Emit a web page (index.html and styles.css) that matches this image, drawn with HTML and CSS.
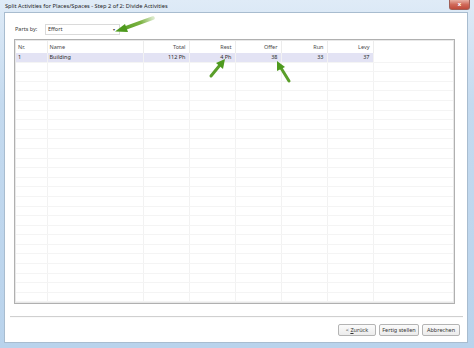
FILE: index.html
```html
<!DOCTYPE html>
<html lang="en">
<head>
    <meta charset="UTF-8">
    <title>Split Activities for Places/Spaces - Step 2 of 2: Divide Activities</title>
    <link rel="stylesheet" href="styles.css">
</head>
<body>
    <div class="window">
        <div class="titlebar">
            <span class="title">Split Activities for Places/Spaces - Step 2 of 2: Divide Activities</span>
            <span class="close">x</span>
        </div>

        <div class="client">
            <div class="parts">
                <span class="parts-label">Parts by:</span>
                <div class="combo">
                    <span>Effort</span>
                    <span class="combo-arrow">&#9662;</span>
                </div>
            </div>

            <div class="listview">
                <table class="grid">
                    <colgroup>
                        <col class="c-nr"><col class="c-name"><col class="c-num"><col class="c-num">
                        <col class="c-num"><col class="c-num"><col class="c-num"><col>
                    </colgroup>
                    <thead>
                        <tr>
                            <th>Nr.</th>
                            <th>Name</th>
                            <th class="num">Total</th>
                            <th class="num">Rest</th>
                            <th class="num">Offer</th>
                            <th class="num">Run</th>
                            <th class="num">Levy</th>
                            <th class="filler"></th>
                        </tr>
                    </thead>
                    <tbody>
                        <tr class="selected">
                            <td>1</td>
                            <td>Building</td>
                            <td class="num">112 Ph</td>
                            <td class="num">4 Ph</td>
                            <td class="num">38</td>
                            <td class="num">33</td>
                            <td class="num">37</td>
                            <td class="filler"></td>
                        </tr>
                        <tr><td></td><td></td><td></td><td></td><td></td><td></td><td></td><td></td></tr>
                        <tr><td></td><td></td><td></td><td></td><td></td><td></td><td></td><td></td></tr>
                        <tr><td></td><td></td><td></td><td></td><td></td><td></td><td></td><td></td></tr>
                        <tr><td></td><td></td><td></td><td></td><td></td><td></td><td></td><td></td></tr>
                        <tr><td></td><td></td><td></td><td></td><td></td><td></td><td></td><td></td></tr>
                        <tr><td></td><td></td><td></td><td></td><td></td><td></td><td></td><td></td></tr>
                        <tr><td></td><td></td><td></td><td></td><td></td><td></td><td></td><td></td></tr>
                        <tr><td></td><td></td><td></td><td></td><td></td><td></td><td></td><td></td></tr>
                        <tr><td></td><td></td><td></td><td></td><td></td><td></td><td></td><td></td></tr>
                        <tr><td></td><td></td><td></td><td></td><td></td><td></td><td></td><td></td></tr>
                        <tr><td></td><td></td><td></td><td></td><td></td><td></td><td></td><td></td></tr>
                        <tr><td></td><td></td><td></td><td></td><td></td><td></td><td></td><td></td></tr>
                        <tr><td></td><td></td><td></td><td></td><td></td><td></td><td></td><td></td></tr>
                        <tr><td></td><td></td><td></td><td></td><td></td><td></td><td></td><td></td></tr>
                        <tr><td></td><td></td><td></td><td></td><td></td><td></td><td></td><td></td></tr>
                        <tr><td></td><td></td><td></td><td></td><td></td><td></td><td></td><td></td></tr>
                        <tr><td></td><td></td><td></td><td></td><td></td><td></td><td></td><td></td></tr>
                        <tr><td></td><td></td><td></td><td></td><td></td><td></td><td></td><td></td></tr>
                        <tr><td></td><td></td><td></td><td></td><td></td><td></td><td></td><td></td></tr>
                        <tr><td></td><td></td><td></td><td></td><td></td><td></td><td></td><td></td></tr>
                        <tr><td></td><td></td><td></td><td></td><td></td><td></td><td></td><td></td></tr>
                        <tr><td></td><td></td><td></td><td></td><td></td><td></td><td></td><td></td></tr>
                        <tr><td></td><td></td><td></td><td></td><td></td><td></td><td></td><td></td></tr>
                        <tr><td></td><td></td><td></td><td></td><td></td><td></td><td></td><td></td></tr>
                        <tr><td></td><td></td><td></td><td></td><td></td><td></td><td></td><td></td></tr>
                    </tbody>
                </table>
            </div>

            <div class="separator"></div>

            <div class="buttons">
                <button class="btn btn-back">&lt; <u>Z</u>urück</button>
                <button class="btn btn-finish">Fertig stellen</button>
                <button class="btn btn-cancel">Abbrechen</button>
            </div>
        </div>

        <!-- hinweis-pfeile aus dem screenshot -->
        <svg class="arrows" width="474" height="348" viewBox="0 0 474 348">
            <defs>
                <linearGradient id="fade1" x1="153" y1="18" x2="118" y2="31" gradientUnits="userSpaceOnUse">
                    <stop offset="0" stop-color="#d8e8c8"/>
                    <stop offset="0.35" stop-color="#7cb342"/>
                    <stop offset="1" stop-color="#4e9a1e"/>
                </linearGradient>
            </defs>
            <g stroke-linecap="round">
                <line x1="153" y1="18" x2="124" y2="28.5" stroke="url(#fade1)" stroke-width="3.5"/>
                <polygon points="115,31.5 125,24 128,32" fill="#4e9a1e"/>

                <line x1="211" y1="76" x2="220" y2="65" stroke="#5a9e2a" stroke-width="3"/>
                <polygon points="225,59 216,63 223,69" fill="#4e9a1e"/>

                <line x1="289" y1="81" x2="281" y2="68" stroke="#5a9e2a" stroke-width="3"/>
                <polygon points="277,61 277,71 285,67" fill="#4e9a1e"/>
            </g>
        </svg>
    </div>
</body>
</html>
```

FILE: styles.css
```css
body {
    margin: 0;
    font-family: "Noto Sans", "Liberation Sans", sans-serif;
    font-size: 5.5px;
    color: #3a3a3a;
}

.window {
    position: relative;
    width: 474px;
    height: 348px;
    display: flex;
    flex-direction: column;
    background: linear-gradient(#dfebf7, #c4daef 30%, #b9d3ec);
    overflow: hidden;
}

.titlebar {
    height: 12px;
    display: flex;
    align-items: flex-start;
    padding-left: 5px;
}

.title {
    margin-top: 2px;
    font-size: 5.7px;
    color: #1e1e1e;
}

.close {
    margin-left: auto;
    margin-right: 4px;
    width: 19px;
    height: 9px;
    line-height: 8px;
    text-align: center;
    color: #fff;
    font-size: 6px;
    font-weight: bold;
    background: linear-gradient(#e8b0a4, #d06a5a 50%, #c04a3a);
    border: 1px solid #a06058;
    border-top: none;
    border-radius: 0 0 3px 3px;
}

.client {
    flex: 1;
    margin: 0 6px 5px 4px;
    background: #fff;
    border: 1px solid #a8bccf;
    display: flex;
    flex-direction: column;
}

.parts {
    display: flex;
    align-items: center;
    margin-top: 10px;
    padding-left: 10px;
    height: 12px;
}

.parts-label {
    width: 30px;
}

.combo {
    width: 75px;
    height: 11px;
    box-sizing: border-box;
    border: 1px solid #dadada;
    display: flex;
    align-items: center;
    padding: 0 4px 0 2px;
}

.combo-arrow {
    margin-left: auto;
    font-size: 4px;
    color: #444;
}

.listview {
    margin: 4px 12px 0 9px;
    height: 265px;
    box-sizing: border-box;
    border: 1px solid #b0b0b0;
    box-shadow: inset 0 0 0 1px #e8e8e8;
    padding: 1px;
    overflow: hidden;
}

.grid {
    width: 100%;
    table-layout: fixed;
    border-collapse: collapse;
}

.c-nr { width: 31px; }
.c-name { width: 96px; }
.c-num { width: 46px; }

.grid th,
.grid td {
    padding: 0 3px 0 2px;
    text-align: left;
    font-weight: normal;
    white-space: nowrap;
    overflow: hidden;
}

.grid th {
    height: 12px;
    border-right: 1px solid #ececec;
    color: #4a4a4a;
}

.grid td {
    height: 8.6px;
    border-right: 1px solid #f2f2f2;
    border-bottom: 1px solid #f4f4f4;
}

.grid th.filler,
.grid td:last-child {
    border-right: none;
}

.grid .num {
    text-align: right;
}

.grid tr.selected td {
    background-color: #e3e3f4;
    color: #2a2a2a;
}

.grid tr.selected td.filler {
    background-color: transparent;
}

.separator {
    margin: 12px 4px 0 5px;
    border-top: 1px solid #d0d0d0;
    border-bottom: 1px solid #fafafa;
}

.buttons {
    display: flex;
    justify-content: flex-end;
    gap: 3px;
    margin-top: 6px;
    padding-right: 7px;
}

.btn {
    height: 12px;
    padding: 0;
    font-family: inherit;
    font-size: 5.5px;
    color: #333;
    background: linear-gradient(#fbfbfb, #ececec);
    border: 1px solid #b4b4b4;
    border-radius: 2px;
}

.btn-back { width: 38px; }
.btn-finish { width: 40px; }
.btn-cancel { width: 38px; }

.arrows {
    position: absolute;
    left: 0;
    top: 0;
    pointer-events: none;
}
```
